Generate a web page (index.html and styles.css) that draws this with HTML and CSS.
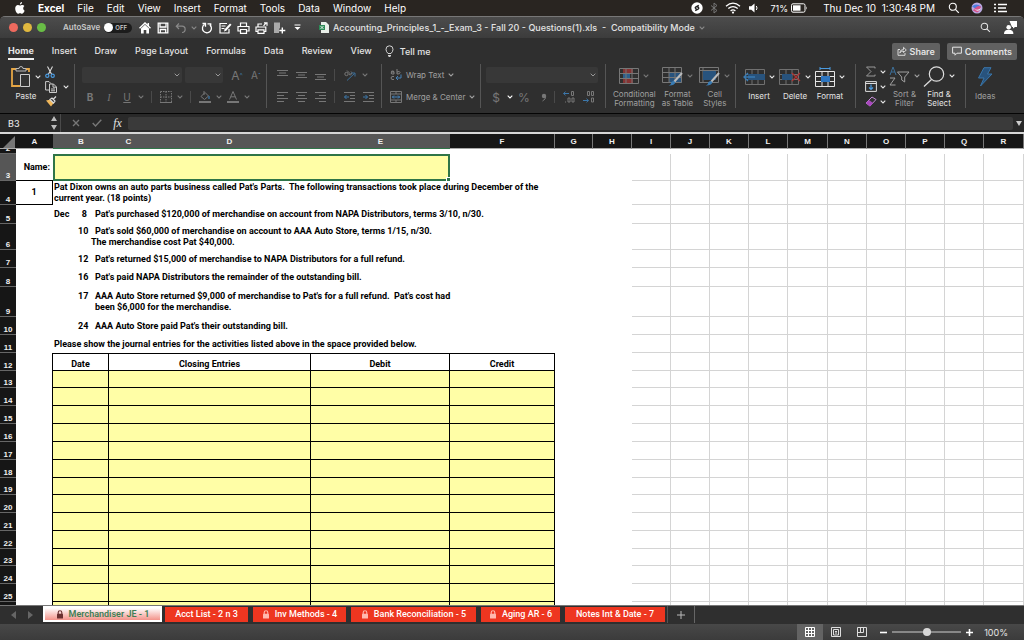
FILE: index.html
```html
<!DOCTYPE html>
<html lang="en">
<head>
<meta charset="utf-8">
<title>Accounting_Principles_1_-_Exam_3 - Fall 20 - Questions(1).xls</title>
<link rel="stylesheet" href="styles.css">
</head>
<body>
<svg class="defs" aria-hidden="true">
  <symbol id="chev" viewBox="0 0 6 4"><path d="M.7.7 3 3 5.3.7" fill="none" stroke="currentColor" stroke-width="1.1"/></symbol>
  <symbol id="lock" viewBox="0 0 8 9"><path d="M2.2 4V2.6a1.8 1.8 0 0 1 3.6 0V4" fill="none" stroke="currentColor" stroke-width="1.1"/><rect x="1" y="3.8" width="6" height="4.6" rx=".5" fill="currentColor"/></symbol>
  <symbol id="glass" viewBox="0 0 12 12"><circle cx="4.8" cy="4.8" r="3.5" fill="none" stroke="currentColor" stroke-width="1.1"/><path d="m7.4 7.4 3.4 3.4" stroke="currentColor" stroke-width="1.2"/></symbol>
  <symbol id="table" viewBox="0 0 20 16"><path d="M.5.5h19v15H.5zM.5 5.5h19M.5 10.5h19M7 .5v15M13 .5v15" fill="none" stroke="currentColor"/></symbol>
</svg>

<nav class="menubar">
  <svg class="apple" viewBox="0 0 10 12"><path d="M7 0C5.7.2 4.9 1.200 5 2.500 6.200 2.500 7.100 1.300 7 0zM9.600 8.700C9 10.300 8 11.700 7 11.700c-.8 0-1.100-.5-2-.5s-1.300.5-2 .5C1.600 11.700.2 8.800.2 6.600c0-2.300 1.300-3.600 2.700-3.600.9 0 1.500.5 2.100.5.7 0 1.300-.6 2.400-.6.8 0 1.500.4 2 1.100-1.700 1-1.500 3.800.2 4.700z" fill="#fff"/></svg>
  <div class="menus"><a href="#" class="app">Excel</a><a href="#">File</a><a href="#">Edit</a><a href="#">View</a><a href="#">Insert</a><a href="#">Format</a><a href="#">Tools</a><a href="#">Data</a><a href="#">Window</a><a href="#">Help</a></div>
  <div class="tray">
    <svg width="12" height="12" viewBox="0 0 12 12"><circle cx="6" cy="6" r="5.700" fill="#fff"/><path d="M7.800 3.300 5 4.800q-1.500 1 0 2l1 .5M4.200 8.700 7 7.200q1.500-1 0-2L6 4.700" fill="none" stroke="#222" stroke-width="1.400"/></svg>
    <svg class="dim" width="8" height="12" viewBox="0 0 8 12"><path d="m1 3.500 6 5-3 2.500V1l3 2.500-6 5" fill="none" stroke="currentColor"/></svg>
    <svg width="16" height="12" viewBox="0 0 16 12"><path d="M1 4.200q7-6 14 0M3.300 6.600q4.700-4 9.400 0M5.600 8.900q2.400-2 4.800 0" fill="none" stroke="#fff" stroke-width="1.300"/><circle cx="8" cy="10.600" r="1.100" fill="#fff"/></svg>
    <svg width="12" height="10" viewBox="0 0 12 10"><path d="M1 3.300h2.300L6.500.6v8.800L3.300 6.700H1z" fill="#fff"/><path d="M8.300 3q1.500 2 0 4" fill="none" stroke="#fff"/></svg>
    <span class="battery">71%<svg width="17" height="10" viewBox="0 0 17 10"><rect x=".5" y=".8" width="13.500" height="8.400" rx="1.500" fill="none" stroke="#fff"/><rect x="2" y="2.300" width="7.500" height="5.400" fill="#fff"/><path d="M15.300 3.200q1.500 1.800 0 3.600z" fill="#fff"/></svg></span>
    <time>Thu Dec 10&nbsp; 1:30:48 PM</time>
    <svg width="12" height="12"><use href="#glass"/></svg>
    <svg width="12" height="12" viewBox="0 0 12 12"><circle cx="6" cy="6" r="5.500" fill="#b9a8e0"/><path d="M1 4.500q4-4 9 0-4 4-9 0" fill="#4b7ee0"/><path d="M2 8.500q4-6 8-4-1 5-4 6" fill="#d6538c"/><path d="M3 7q4 2 7-1-2 5-7 1" fill="#eafaff"/></svg>
    <svg width="14" height="10" viewBox="0 0 14 10"><path d="M0 1.500h2M0 5h2M0 8.500h2M4 1.500h9M4 5h8M4 8.500h9" stroke="#fff" stroke-width="1.500"/></svg>
  </div>
</nav>

<div class="window">
<header class="titlebar">
  <div class="lights"><button class="close" aria-label="Close"></button><button class="mini" aria-label="Minimize"></button><button class="full" aria-label="Zoom"></button></div>
  <label class="autosave">AutoSave <span class="switch"><input type="checkbox">OFF</span></label>
  <div class="quick">
    <button aria-label="Home"><svg width="12" height="12" viewBox="0 0 12 12"><path d="M.5 6.300 6 1l5.500 5.300M9.300 1v3" fill="none" stroke="currentColor" stroke-width="1.500"/><path d="M2 6.500 6 2.700l4 3.800v5H7.300V8H4.700v3.500H2z" fill="currentColor"/></svg></button>
    <button aria-label="Save"><svg width="12" height="12" viewBox="0 0 12 12"><path d="M1.200 1.200h9.600v9.600H1.200z" fill="none" stroke="currentColor" stroke-width="1.300"/><path d="M3 1v4h6V1M3.300 11V7.500h5.400V11" fill="none" stroke="currentColor" stroke-width="1.300"/></svg></button>
    <button class="dim" aria-label="Undo"><svg width="12" height="12" viewBox="0 0 12 12"><path d="M4 1.500 1.300 4.200 4 7M1.500 4.200H7a3 3 0 0 1 0 6.300" fill="none" stroke="currentColor" stroke-width="1.200"/></svg></button>
    <button class="small dim" aria-label="Undo list"><svg class="chev"><use href="#chev"/></svg></button>
    <button aria-label="Repeat"><svg width="12" height="12" viewBox="0 0 12 12"><path d="M3.500 2.500a4.500 4.500 0 1 0 5.300.3M1.500 1.500h3v3.200M9.700 5V1.800H6.500" fill="none" stroke="currentColor" stroke-width="1.300"/></svg></button>
    <button aria-label="Edit"><svg width="13" height="12" viewBox="0 0 13 12"><path d="M8 1.500H1v9.500h9V7M2.500 4h4M2.500 6.500h3" fill="none" stroke="currentColor" stroke-width="1.200"/><path d="m5 9.500.7-2.300L11 1.500l1.500 1.300-5.300 6z" fill="currentColor"/></svg></button>
    <button aria-label="Print"><svg width="13" height="12" viewBox="0 0 13 12"><path d="M3.500 4V1h6v3M3.500 9H1V4.500h11V9H9.500M3.500 7.500h6v3.800h-6z" fill="none" stroke="currentColor" stroke-width="1.200"/></svg></button>
    <button aria-label="Quick print"><svg width="13" height="12" viewBox="0 0 13 12"><path d="M3 4.500V2h4M3 9.500H1V5h9.800v4.500H9M3 7.800h6v3.500H3z" fill="none" stroke="currentColor" stroke-width="1.200"/><path d="M8.500 3.800 11 1.200M9 .8h3v3" fill="none" stroke="currentColor" stroke-width="1.200"/></svg></button>
    <button aria-label="New"><svg width="13" height="12" viewBox="0 0 13 12"><path d="M1 .5h6v6H6V11H1z" fill="#aaa"/><path d="M9.300 5.500v6M6.300 8.500h6" stroke="currentColor" stroke-width="1.400"/></svg></button>
    <button aria-label="Customize"><svg width="7" height="7" viewBox="0 0 7 7"><path d="M.5 1h6" stroke="currentColor"/><path d="M.5 3h6l-3 3z" fill="currentColor"/></svg></button>
  </div>
  <h1><svg width="10" height="11" viewBox="0 0 10 11"><path d="M2 0h5l3 3v8H2z" fill="#e9efe9"/><rect y="3" width="6" height="5" fill="#2c8b57"/><path d="m1.500 4 3 3m0-3-3 3" stroke="#fff" stroke-width=".8"/></svg>Accounting_Principles_1_-_Exam_3 - Fall 20 - Questions(1).xls&nbsp; -&nbsp; Compatibility Mode<svg class="chev"><use href="#chev"/></svg></h1>
  <div class="tools"><button aria-label="Search"><svg width="11" height="11"><use href="#glass"/></svg></button><button aria-label="Account"><svg width="13" height="13" viewBox="0 0 13 13"><path d="M5.500 0H13v6h-2L9 7.500V6H8z" fill="#fff"/><circle cx="4.700" cy="6.300" r="2.300" fill="#fff"/><path d="M0 13q0-4.200 4.700-4.200T9.400 13z" fill="#fff"/></svg></button></div>
</header>

<div class="tabs">
  <nav><a href="#" class="on">Home</a><a href="#">Insert</a><a href="#">Draw</a><a href="#">Page Layout</a><a href="#">Formulas</a><a href="#">Data</a><a href="#">Review</a><a href="#">View</a></nav>
  <a href="#" class="tell"><svg width="9" height="12" viewBox="0 0 9 12"><path d="M3 8.500Q1 6.500 1 4.300a3.500 3.500 0 0 1 7 0q0 2.200-2 4.200zM3 10.500h3M3.500 11.500h2" fill="none" stroke="currentColor" stroke-width=".9"/></svg>Tell me</a>
  <div class="share"><button><svg width="10" height="10" viewBox="0 0 10 10"><path d="M3 3.500H1v5.800h7V7M2.700 7Q3 3.500 6.500 3.500V1.300L9.300 4 6.500 6.500V5Q4 5 2.700 7" fill="none" stroke="currentColor" stroke-width=".9"/></svg>Share</button><button><svg width="10" height="10" viewBox="0 0 10 10"><path d="M.6 1.200h8.800v6H5L3 9.200v-2H.6z" fill="none" stroke="currentColor"/></svg>Comments</button></div>
</div>

<div class="ribbon">
  <section class="group clipboard">
    <button class="big"><span class="pic"><svg width="20" height="22" viewBox="0 0 20 22"><path d="M5 3H1v17h8M15 3h3v3" fill="none" stroke="#e5a645" stroke-width="1.800"/><path d="M5 5V2.500h3a2 2 0 0 1 4 0h3V5z" fill="#333" stroke="#bbb"/><path d="M9.500 8.500h9v12h-9z" fill="#333" stroke="#ccc"/></svg><svg class="chev"><use href="#chev"/></svg></span>Paste</button>
    <div class="stack">
      <button aria-label="Cut"><svg width="10" height="12" viewBox="0 0 10 12"><path d="m2.500.5 4.200 8M7.500.5l-4.200 8" stroke="#ddd" stroke-width="1.100"/><g fill="none" stroke="#4b9be0" stroke-width="1.200"><circle cx="2.300" cy="9.700" r="1.600"/><circle cx="7.700" cy="9.700" r="1.600"/></g></svg></button>
      <button aria-label="Copy"><svg width="12" height="12" viewBox="0 0 12 12"><path d="M4 9H.6V.6H4l2 2M4.500 3h4l3 3v5.500h-7zM8 3v3.200h3.500M6 8h4M6 9.800h4" fill="none" stroke="#ccc"/></svg><svg class="chev"><use href="#chev"/></svg></button>
      <button aria-label="Format painter"><svg width="12" height="11" viewBox="0 0 12 11"><path d="m1 4.500 5-1 3 3-3 4z" fill="#f0b75b"/><path d="m5 3.500 2-1.500 3 3-1.500 2zM8.500 3l2.500-2.500" fill="#333" stroke="#ddd" stroke-width="1.200"/></svg></button>
    </div>
  </section>
  <section class="group font dim">
    <div class="line"><select class="face" aria-label="Font"><option></option></select><select class="size" aria-label="Font size"><option></option></select><button class="w20 letter">A<sup>^</sup></button><button class="w18 letter less">A<sup>ˇ</sup></button></div>
    <div class="line"><button class="w20"><b>B</b></button><button class="w18 serif"><i>I</i></button><button class="w18"><u>U</u></button><button class="w10" aria-label="Underline style"><svg class="chev"><use href="#chev"/></svg></button><span class="bar"></span><button class="w18" aria-label="Borders"><svg width="12" height="12" viewBox="0 0 12 12"><path d="M.5.5h11v11H.5zM6 .5v11M.5 6h11" fill="none" stroke="currentColor" stroke-dasharray="1.500 1"/><path d="M0 11.500h12" stroke="currentColor"/></svg></button><button class="w10" aria-label="Border style"><svg class="chev"><use href="#chev"/></svg></button><span class="bar"></span><button class="w18" aria-label="Fill"><svg width="12" height="12" viewBox="0 0 12 12"><path d="m2 5.500 4-4L9.500 5 5.500 8.500zM5 0v4" fill="none" stroke="currentColor"/><path d="M10 5v3" stroke="#3d6f99" stroke-width="1.500"/><path d="M0 10h12v2H0z" fill="currentColor"/></svg></button><button class="w10" aria-label="Fill colors"><svg class="chev"><use href="#chev"/></svg></button><button class="w18" aria-label="Font color"><svg width="12" height="12" viewBox="0 0 12 12"><path d="M2.500 8.500 6 .5l3.500 8M3.700 5.800h4.600" fill="none" stroke="currentColor"/><path d="M0 10h12v2H0z" fill="currentColor"/></svg></button><button class="w10" aria-label="Font colors"><svg class="chev"><use href="#chev"/></svg></button></div>
  </section>
  <section class="group align dim">
    <div class="line"><button aria-label="Top"><svg width="11" height="10" viewBox="0 0 11 10"><path d="M0 .5h11M2 3h7M0 5.500h11" stroke="currentColor"/></svg></button><button aria-label="Middle"><svg width="11" height="10" viewBox="0 0 11 10"><path d="M0 2.500h11M2 5h7M0 7.500h11" stroke="currentColor"/></svg></button><button aria-label="Bottom"><svg width="11" height="10" viewBox="0 0 11 10"><path d="M0 4.500h11M2 7h7M0 9.500h11" stroke="currentColor"/></svg></button><span class="bar"></span><button class="wide" aria-label="Orientation"><svg width="12" height="11" viewBox="0 0 12 11"><circle cx="2.500" cy="4" r="1.700" fill="none" stroke="currentColor"/><path d="m3 .5 4 4M5 4.500a1.500 1.500 0 1 0 2-3" fill="none" stroke="currentColor"/><path d="m3 10.500 7.500-7M7.500 3H11v3.500" fill="none" stroke="#3d6f99"/></svg><svg class="chev"><use href="#chev"/></svg></button></div>
    <div class="line"><button aria-label="Left"><svg width="11" height="10" viewBox="0 0 11 10"><path d="M0 .5h11M0 3.500h7M0 6.500h11M0 9.500h7" stroke="currentColor"/></svg></button><button aria-label="Center"><svg width="11" height="10" viewBox="0 0 11 10"><path d="M0 .5h11M2 3.500h7M0 6.500h11M2 9.500h7" stroke="currentColor"/></svg></button><button aria-label="Right"><svg width="11" height="10" viewBox="0 0 11 10"><path d="M0 .5h11M4 3.500h7M0 6.500h11M4 9.500h7" stroke="currentColor"/></svg></button><span class="bar"></span><button aria-label="Outdent"><svg width="11" height="10" viewBox="0 0 11 10"><path d="M0 .5h11M6 3.500h5M6 6.500h5M0 9.500h11" stroke="currentColor"/><path d="M5 5H.5M2.500 3l-2 2 2 2" fill="none" stroke="#3d78ab"/></svg></button><button aria-label="Indent"><svg width="11" height="10" viewBox="0 0 11 10"><path d="M0 .5h11M6 3.500h5M6 6.500h5M0 9.500h11" stroke="currentColor"/><path d="M0 5h4.500M2.500 3l2 2-2 2" fill="none" stroke="#3d78ab"/></svg></button></div>
  </section>
  <section class="group wrap faded">
    <div class="line"><button><svg width="12" height="12" viewBox="0 0 12 12"><path d="M1 2.500q3-1.500 3 .5v2q-3 .5-3-1t3-1M7 0v5q3 .3 3-1.500T7 3M4 7.500q-3-.5-3 1.500t3 1.500" fill="none" stroke="#8a8a8a" stroke-width=".9"/><path d="M11 5.500V9H6M8 7 6 9l2 2" fill="none" stroke="#4682b8"/></svg>Wrap Text<svg class="chev"><use href="#chev"/></svg></button></div>
    <div class="line"><button><svg width="12" height="12" viewBox="0 0 12 12"><path d="M.5.5h11v11H.5zM.5 3h11M.5 9h11M6 .5V3M6 9v2.500" fill="none" stroke="#777"/><path d="M2 6h8M4 4.500 2.500 6 4 7.500M8 4.500 9.500 6 8 7.500" fill="none" stroke="#4682b8"/></svg>Merge &amp; Center<svg class="chev"><use href="#chev"/></svg></button></div>
  </section>
  <section class="group number dim">
    <div class="line"><select aria-label="Number format"><option></option></select></div>
    <div class="line symbols"><button>$</button><button class="small lit" aria-label="Currency"><svg class="chev"><use href="#chev"/></svg></button><button>%</button><button class="comma" aria-label="Comma style"><svg width="6" height="9" viewBox="0 0 6 9"><circle cx="3" cy="3" r="2.200" fill="currentColor"/><path d="M4.700 3Q5 6.500 1.500 8" fill="none" stroke="currentColor"/></svg></button><span class="bar"></span><button aria-label="Increase decimal"><svg width="12" height="12" viewBox="0 0 12 12"><path d="M6 2.500H.5M2.500.7.600 2.500l1.900 1.800" fill="none" stroke="#3d78ab"/><path d="M8.500.5h2v4h-2zM5 7h2v4H5zM9 7h2v4H9zM2.500 10.500v1" fill="none" stroke="currentColor"/></svg></button><button aria-label="Decrease decimal"><svg width="12" height="12" viewBox="0 0 12 12"><path d="M0 9.500h5.500M3.500 7.700l1.900 1.800-1.900 1.800" fill="none" stroke="#3d78ab"/><path d="M4.500.5h2v4h-2zM8.500.5h2v4h-2zM8.500 7h2v4h-2z" fill="none" stroke="currentColor"/></svg></button></div>
  </section>
  <section class="group styles faded">
    <button class="big"><span class="pic"><svg width="20" height="16" viewBox="0 0 20 16"><rect x="4" width="10" height="5" fill="#853333"/><rect x="4" y="6" width="7" height="4" fill="#2e5f8b"/><rect x="4" y="11" width="10" height="5" fill="#853333"/><use href="#table" width="20" height="16"/></svg><svg class="chev"><use href="#chev"/></svg></span>Conditional<br>Formatting</button>
    <button class="big"><span class="pic"><svg width="21" height="19" viewBox="0 0 21 19"><path d="M7 6h13v10H7z" fill="#28537d"/><use href="#table" width="20" height="16"/><path d="m20 6-8 9" stroke="#bbb" stroke-width="2"/><path d="m12 14 1.500 1.500q-1.500 3.500-7 3 3-1 2.500-3 1.500-2 3-1.500" fill="#397bb3"/></svg><svg class="chev"><use href="#chev"/></svg></span>Format<br>as Table</button>
    <button class="big"><span class="pic"><svg width="21" height="19" viewBox="0 0 21 19"><path d="M.5.5h19v15H.5zM.5 3.500h19M4 .5v15" fill="none" stroke="currentColor"/><path d="M4 4h13v9H4z" fill="#28537d"/><path d="m20 6-8 9" stroke="#bbb" stroke-width="2"/><path d="m12 14 1.500 1.500q-1.500 3.500-7 3 3-1 2.500-3 1.500-2 3-1.500" fill="#397bb3"/></svg><svg class="chev"><use href="#chev"/></svg></span>Cell<br>Styles</button>
  </section>
  <section class="group cells">
    <button class="big"><span class="pic"><svg class="grayed" width="22" height="16" viewBox="0 0 22 16"><use href="#table" x="2" width="20" height="16"/><path d="M5 5h17v6H5z" fill="#28537d"/><path d="M12 8H1M5 4 1 8l4 4" fill="none" stroke="#397bb3" stroke-width="1.300"/></svg><svg class="chev"><use href="#chev"/></svg></span>Insert</button>
    <button class="big"><span class="pic"><svg class="grayed" width="22" height="16" viewBox="0 0 22 16"><use href="#table" width="20" height="16"/><path d="M3 5h10v6H3z" fill="#28537d"/><path d="m13 4 8 8m0-8-8 8" stroke="#a33" stroke-width="1.300"/></svg><svg class="chev"><use href="#chev"/></svg></span>Delete</button>
    <button class="big"><span class="pic"><svg width="20" height="20" viewBox="0 0 20 20"><path d="M5 1.500h10M5 0v3M15 0v3" stroke="#4b9be0"/><use href="#table" y="4" width="20" height="16"/><path d="M6 9h9v6H6z" fill="#2d75c0"/></svg><svg class="chev"><use href="#chev"/></svg></span>Format</button>
  </section>
  <section class="group editing">
    <div class="stack">
      <button aria-label="Sum"><svg width="12" height="11" viewBox="0 0 12 11"><path d="M10 2.500V1H1.500L6 5.500 1.500 10H10V8.500" fill="none" stroke="#999"/></svg><svg class="chev"><use href="#chev"/></svg></button>
      <button aria-label="Fill"><svg width="12" height="11" viewBox="0 0 12 11"><path d="M.6.6h10.800v9.800H.6zM.6 2.500h10.800" fill="none" stroke="#ddd"/><path d="M6 3.500v5M4 6.500l2 2 2-2" fill="none" stroke="#4b9be0" stroke-width="1.200"/></svg><svg class="chev"><use href="#chev"/></svg></button>
      <button aria-label="Clear"><svg width="12" height="11" viewBox="0 0 12 11"><path d="m1 7 6-6 4 2.500-6 6.500z" fill="#333" stroke="#c58ad6"/><path d="m1 7 3-3 4 3-3 3.500z" fill="#a847bd"/></svg><svg class="chev"><use href="#chev"/></svg></button>
    </div>
    <button class="big faded"><span class="pic"><svg width="21" height="20" viewBox="0 0 21 20"><path d="m1 9 3-8 3 8M2 6h4" fill="none" stroke="#3d6f99"/><path d="M1 12h5l-5 7h5.500M8.500 6h11.500l-4.300 5v5l-3-2v-3z" fill="none" stroke="currentColor"/></svg><svg class="chev"><use href="#chev"/></svg></span>Sort &amp;<br>Filter</button>
    <button class="big"><span class="pic"><svg width="22" height="21" viewBox="0 0 22 21"><circle cx="13.500" cy="8" r="7.200" fill="none" stroke="#ddd" stroke-width="1.200"/><path d="m8.500 13.500-7.500 7" stroke="#ddd" stroke-width="1.300"/></svg><svg class="chev"><use href="#chev"/></svg></span>Find &amp;<br>Select</button>
  </section>
  <section class="group ideas faded">
    <button class="big"><span class="pic"><svg width="16" height="20" viewBox="0 0 16 20"><path d="M7 .7h7L10.500 7H15L3.500 19 7 11H1.500z" fill="#28537d" stroke="#3a76aa"/></svg></span>Ideas</button>
  </section>
</div>

<div class="formula">
  <input class="namebox" value="B3" aria-label="Name box">
  <svg width="6" height="14" viewBox="0 0 6 14"><path d="m0 5 3-5 3 5zM0 9h6l-3 5z" fill="#bbb"/></svg>
  <span class="bar"></span>
  <button class="dim" aria-label="Cancel"><svg width="8" height="8" viewBox="0 0 8 8"><path d="m1 1 6 6m0-6L1 7" stroke="currentColor" stroke-width="1.400"/></svg></button>
  <button class="dim" aria-label="Enter"><svg width="10" height="8" viewBox="0 0 10 8"><path d="m.7 4 2.800 3L9.300.7" fill="none" stroke="currentColor" stroke-width="1.400"/></svg></button>
  <button class="fx">fx</button>
  <input class="entry" aria-label="Formula">
  <svg width="6" height="5" viewBox="0 0 6 5"><path d="M0 0h6L3 5z" fill="#ccc"/></svg>
</div>

<main class="grid">
<table class="sheet">
<colgroup><col class="c16"><col class="c37"><col class="c56"><col class="c39"><col class="c163"><col class="c139"><col class="c105"><col class="c38"><col class="c39"><col class="c39"><col class="c39"><col class="c39"><col class="c39"><col class="c40"><col class="c39"><col class="c39"><col class="c39"><col class="c39"><col></colgroup>
<thead><tr><th class="corner"><svg width="12" height="12" viewBox="0 0 12 12"><path d="M12 0v12H0z" fill="#777"/></svg></th><th>A</th><th class="sel">B</th><th class="sel">C</th><th class="sel">D</th><th class="sel">E</th><th>F</th><th>G</th><th>H</th><th>I</th><th>J</th><th>K</th><th>L</th><th>M</th><th>N</th><th>O</th><th>P</th><th>Q</th><th>R</th></tr></thead>
<tbody>
<tr class="cut"><th><span>2</span></th><td colspan="18"></td></tr>
<tr class="h27"><th class="sel">3</th><td class="name">Name:</td><td class="active" colspan="4"><span class="handle"></span></td><td colspan="3"></td><td><td><td><td><td><td><td><td><td><td></tr>
<tr class="h24"><th>4</th><td class="qnum">1</td><td class="text" colspan="7">Pat Dixon owns an auto parts business called Pat's Parts.&nbsp; The following transactions took place during December of the<br>current year. (18 points)</td><td><td><td><td><td><td><td><td><td><td></tr>
<tr class="h19"><th>5</th><td></td><td class="text" colspan="7"><div class="item"><span>Dec</span><span class="day">8</span><span>Pat's purchased $120,000 of merchandise on account from NAPA Distributors, terms 3/10, n/30.</span></div></td><td><td><td><td><td><td><td><td><td><td></tr>
<tr class="h26"><th>6</th><td></td><td class="text" colspan="7"><div class="item"><span></span><span class="day">10</span><span>Pat's sold $60,000 of merchandise on account to AAA Auto Store, terms 1/15, n/30.</span></div><div class="more">The merchandise cost Pat $40,000.</div></td><td><td><td><td><td><td><td><td><td><td></tr>
<tr class="h18"><th>7</th><td></td><td class="text" colspan="7"><div class="item"><span></span><span class="day">12</span><span>Pat's returned $15,000 of merchandise to NAPA Distributors for a full refund.</span></div></td><td><td><td><td><td><td><td><td><td><td></tr>
<tr class="h19"><th>8</th><td></td><td class="text" colspan="7"><div class="item"><span></span><span class="day">16</span><span>Pat's paid NAPA Distributors the remainder of the outstanding bill.</span></div></td><td><td><td><td><td><td><td><td><td><td></tr>
<tr class="h30"><th>9</th><td></td><td class="text" colspan="7"><div class="item"><span></span><span class="day">17</span><span>AAA Auto Store returned $9,000 of merchandise to Pat's for a full refund.&nbsp; Pat's cost had<br>been $6,000 for the merchandise.</span></div></td><td><td><td><td><td><td><td><td><td><td></tr>
<tr class="h18"><th>10</th><td></td><td class="text" colspan="7"><div class="item"><span></span><span class="day">24</span><span>AAA Auto Store paid Pat's their outstanding bill.</span></div></td><td><td><td><td><td><td><td><td><td><td></tr>
<tr class="h18"><th>11</th><td></td><td class="text" colspan="7">Please show the journal entries for the activities listed above in the space provided below.</td><td><td><td><td><td><td><td><td><td><td></tr>
<tr class="h18 head"><th>12</th><td class="edge"></td><td class="j">Date</td><td class="j" colspan="2">Closing Entries</td><td class="j">Debit</td><td class="j">Credit</td><td colspan="2"></td><td><td><td><td><td><td><td><td><td><td></tr>
<tr class="h17"><th>13</th><td class="edge"></td><td class="j y"></td><td class="j y" colspan="2"></td><td class="j y"></td><td class="j y"></td><td colspan="2"></td><td><td><td><td><td><td><td><td><td><td></tr>
<tr class="h18"><th>14</th><td class="edge"></td><td class="j y"></td><td class="j y" colspan="2"></td><td class="j y"></td><td class="j y"></td><td colspan="2"></td><td><td><td><td><td><td><td><td><td><td></tr>
<tr class="h18"><th>15</th><td class="edge"></td><td class="j y"></td><td class="j y" colspan="2"></td><td class="j y"></td><td class="j y"></td><td colspan="2"></td><td><td><td><td><td><td><td><td><td><td></tr>
<tr class="h18"><th>16</th><td class="edge"></td><td class="j y"></td><td class="j y" colspan="2"></td><td class="j y"></td><td class="j y"></td><td colspan="2"></td><td><td><td><td><td><td><td><td><td><td></tr>
<tr class="h18"><th>17</th><td class="edge"></td><td class="j y"></td><td class="j y" colspan="2"></td><td class="j y"></td><td class="j y"></td><td colspan="2"></td><td><td><td><td><td><td><td><td><td><td></tr>
<tr class="h18"><th>18</th><td class="edge"></td><td class="j y"></td><td class="j y" colspan="2"></td><td class="j y"></td><td class="j y"></td><td colspan="2"></td><td><td><td><td><td><td><td><td><td><td></tr>
<tr class="h17"><th>19</th><td class="edge"></td><td class="j y"></td><td class="j y" colspan="2"></td><td class="j y"></td><td class="j y"></td><td colspan="2"></td><td><td><td><td><td><td><td><td><td><td></tr>
<tr class="h18"><th>20</th><td class="edge"></td><td class="j y"></td><td class="j y" colspan="2"></td><td class="j y"></td><td class="j y"></td><td colspan="2"></td><td><td><td><td><td><td><td><td><td><td></tr>
<tr class="h18"><th>21</th><td class="edge"></td><td class="j y"></td><td class="j y" colspan="2"></td><td class="j y"></td><td class="j y"></td><td colspan="2"></td><td><td><td><td><td><td><td><td><td><td></tr>
<tr class="h18"><th>22</th><td class="edge"></td><td class="j y"></td><td class="j y" colspan="2"></td><td class="j y"></td><td class="j y"></td><td colspan="2"></td><td><td><td><td><td><td><td><td><td><td></tr>
<tr class="h17"><th>23</th><td class="edge"></td><td class="j y"></td><td class="j y" colspan="2"></td><td class="j y"></td><td class="j y"></td><td colspan="2"></td><td><td><td><td><td><td><td><td><td><td></tr>
<tr class="h18"><th>24</th><td class="edge"></td><td class="j y"></td><td class="j y" colspan="2"></td><td class="j y"></td><td class="j y"></td><td colspan="2"></td><td><td><td><td><td><td><td><td><td><td></tr>
<tr class="h18"><th>25</th><td class="edge"></td><td class="j y"></td><td class="j y" colspan="2"></td><td class="j y"></td><td class="j y"></td><td colspan="2"></td><td><td><td><td><td><td><td><td><td><td></tr>
<tr class="h18"><th></th><td class="edge"></td><td class="j y"></td><td class="j y" colspan="2"></td><td class="j y"></td><td class="j y"></td><td colspan="2"></td><td><td><td><td><td><td><td><td><td><td></tr>
</tbody>
</table>
</main>

<div class="sheets">
  <button class="arrow" aria-label="Previous sheet"><svg width="5" height="8" viewBox="0 0 5 8"><path d="M5 0v8L0 4z" fill="#666"/></svg></button>
  <button class="arrow" aria-label="Next sheet"><svg width="5" height="8" viewBox="0 0 5 8"><path d="M0 0v8l5-4z" fill="#666"/></svg></button>
  <nav>
    <a href="#" class="current w119"><svg class="lock"><use href="#lock"/></svg>Merchandiser JE - 1</a>
    <a href="#" class="w83">Acct List - 2 n 3</a>
    <a href="#" class="w93"><svg class="lock"><use href="#lock"/></svg>Inv Methods - 4</a>
    <a href="#" class="w125"><svg class="lock"><use href="#lock"/></svg>Bank Reconciliation - 5</a>
    <a href="#" class="w79"><svg class="lock"><use href="#lock"/></svg>Aging AR - 6</a>
    <a href="#" class="w100">Notes Int &amp; Date - 7</a>
  </nav>
  <button class="add" aria-label="Add sheet"><svg width="8" height="8" viewBox="0 0 8 8"><path d="M4 0v8M0 4h8" stroke="#bbb"/></svg></button>
</div>

<footer class="status">
  <button class="view on" aria-label="Normal"><svg width="10" height="10" viewBox="0 0 10 10"><path d="M.5.500h9v9h-9zM3.500.5v9M6.500.5v9M.5 3.500h9M.5 6.500h9" fill="none" stroke="#fff"/></svg></button>
  <button class="view" aria-label="Page layout"><svg width="10" height="10" viewBox="0 0 10 10"><path d="M.5.500h9v9h-9zM2.500 2.500h5v5.500h-5zM4 4.500h2M4 6h2" fill="none" stroke="#ddd"/></svg></button>
  <button class="view" aria-label="Page break"><svg width="10" height="10" viewBox="0 0 10 10"><path d="M.5.500h9v9h-9zM.5 5.500h6v-5M3.500 .5v5" fill="none" stroke="#ddd"/></svg></button>
  <button class="step" aria-label="Zoom out"><svg width="7" height="7" viewBox="0 0 7 7"><path d="M0 3.500h7" stroke="#fff" stroke-width="1.600"/></svg></button>
  <input type="range" aria-label="Zoom" value="50">
  <button class="step" aria-label="Zoom in"><svg width="7" height="7" viewBox="0 0 7 7"><path d="M0 3.500h7M3.500 0v7" stroke="#fff" stroke-width="1.600"/></svg></button>
  <span class="pct">100%</span>
</footer>
</div>
</body>
</html>
```

FILE: styles.css
```css
* { box-sizing: border-box; }
body {
  margin: 0;
  height: 100vh;
  display: flex;
  flex-direction: column;
  overflow: hidden;
  background: #292521;
  color: #e4e4e4;
  font: 9px/11px Inter, "Liberation Sans", sans-serif;
}
.defs { position: absolute; width: 0; height: 0; }
svg { display: block; flex: none; }
a { color: inherit; text-decoration: none; white-space: nowrap; }
button {
  display: flex;
  align-items: center;
  justify-content: center;
  flex: none;
  margin: 0;
  padding: 0;
  border: 0;
  background: none;
  color: inherit;
  font: inherit;
  white-space: nowrap;
}
input, select { margin: 0; border: 0; color: inherit; font: inherit; }
.chev { width: 6px; height: 4px; }
.dim { color: #777; }
.faded { color: #a0a0a0; }

/* System menu bar */
.menubar {
  display: flex;
  align-items: center;
  height: 16px;
  padding: 0 16px 0 15px;
  font-size: 10px;
  color: #fff;
}
.apple { width: 10px; height: 12px; margin-right: 13px; }
.menus { display: flex; gap: 13px; }
.app { font-weight: 700; }
.tray { display: flex; align-items: center; gap: 11px; margin-left: auto; white-space: nowrap; }
.tray > svg:nth-child(-n+3) { margin-right: -4px; }
.battery { display: flex; align-items: center; gap: 3px; margin-right: 4px; font-size: 9px; }
time { margin-right: 2px; }

/* Window */
.window {
  display: flex;
  flex-direction: column;
  flex: 1;
  min-height: 0;
  border-top: 1px solid #777;
  border-radius: 5px 5px 0 0;
  background: #2f2f2f;
  overflow: hidden;
}
.titlebar {
  display: flex;
  align-items: center;
  height: 21px;
  flex: none;
  padding: 0 7px 0 9px;
  background: linear-gradient(#4c4c4c, #3c3c3c);
}
.lights { display: flex; gap: 5px; margin-right: 17px; }
.lights button { width: 9px; height: 9px; border-radius: 50%; }
.close { background: #ee6a5e; }
.mini { background: #e0b83f; }
.full { background: #69bd46; }
.autosave { display: flex; align-items: center; gap: 4px; width: 73px; font-size: 8px; font-weight: 600; color: #c8c8c8; }
.switch { display: flex; align-items: center; gap: 2px; width: 28px; height: 10px; border-radius: 5px; background: #1c1c1c; font-size: 6px; }
.switch input { appearance: none; width: 9px; height: 9px; border-radius: 50%; background: #fff; }
.quick { display: flex; align-items: center; width: 183px; color: #fff; }
.quick button { width: 18px; height: 16px; }
.quick .small { width: 8px; }
.quick .dim { color: #888; }
h1 { display: flex; align-items: center; gap: 4px; margin: 0; font-size: 9px; font-weight: 500; white-space: nowrap; }
h1 .chev { color: #888; }
.tools { display: flex; gap: 13px; margin-left: auto; }

/* Ribbon tabs */
.tabs { display: flex; align-items: center; height: 26px; flex: none; padding: 0 7px 0 8px; font-weight: 500; }
.tabs nav { display: flex; gap: 18px; }
.tabs nav a { height: 18px; padding-top: 3px; }
.tabs .on { border-bottom: 2px solid #eee; font-weight: 700; }
.tell { display: flex; align-items: center; gap: 6px; margin-left: 13px; }
.share { display: flex; gap: 7px; margin-left: auto; }
.share button { height: 17px; padding: 0 5px; gap: 3px; border-radius: 2px; background: #616161; font-weight: 600; }

/* Ribbon */
.ribbon { display: flex; height: 50px; flex: none; padding-bottom: 2px; border-bottom: 1px solid #050505; font-size: 8px; line-height: 9px; }
.group { flex: none; display: flex; height: 44px; border-right: 1px solid #555; }
.group.font, .align, .wrap, .number { flex-direction: column; }
.line { display: flex; align-items: center; height: 23px; }
.bar { flex: none; width: 1px; height: 12px; background: #4a4a4a; }
.big { flex-direction: column; justify-content: flex-start; }
.pic { display: flex; align-items: center; justify-content: center; gap: 5px; height: 26px; margin-bottom: 2px; }
.stack { display: flex; flex-direction: column; }
.stack button { height: 15px; gap: 6px; justify-content: flex-start; }
.clipboard { width: 75px; padding-left: 11px; gap: 4px; }
.clipboard .big .pic { gap: 4px; }
.font { width: 192px; padding-left: 5px; }
select { appearance: none; height: 16px; border-radius: 2px; }
.face { width: 100px; margin: 0 3px 0 2px; }
.size { width: 38px; margin-right: 4px; }
.face, .size, .number select {
  background: #383838 url("data:image/svg+xml,%3Csvg xmlns='http://www.w3.org/2000/svg' width='6' height='4'%3E%3Cpath d='M.7.7 3 3 5.300.7' fill='none' stroke='%23999'/%3E%3C/svg%3E") no-repeat right 2px center;
}
.w20 { width: 20px; }
.w18 { width: 18px; }
.w10 { width: 10px; }
.font .line { font-size: 10px; }
.font .bar { margin: 0 5px; }
.font .letter { font-size: 12px; }
.font .less { font-size: 10px; }
sup { font-size: 7px; line-height: 7px; color: #3d6f99; }
.serif { font-family: "Liberation Serif", serif; }
.align { width: 115px; padding-left: 6px; }
.align button { width: 19px; }
.align .bar { margin: 0 5px 0 4px; }
.align .wide { width: 32px; gap: 6px; }
.wrap { width: 99px; padding-left: 8px; }
.wrap button { gap: 4px; }
.number { width: 125px; padding-left: 5px; }
.number select { width: 112px; }
.symbols { font-size: 12px; }
.symbols button { width: 20px; }
.symbols .small { width: 8px; }
.symbols .bar { margin-right: 4px; }
.lit { color: #fff; }
.styles { width: 130px; padding-left: 7px; gap: 6px; }
.styles .pic { color: #777; }
.styles .pic, .cells .pic, .editing .pic { gap: 4px; }
.cells { width: 120px; padding-left: 7px; gap: 4px; }
.grayed { color: #707070; }
.editing { width: 110px; padding-left: 9px; gap: 3px; }
.editing .stack button { gap: 3px; }
.ideas { flex: 1; border: 0; padding-left: 9px; }

/* Formula bar */
.formula { display: flex; align-items: center; height: 18px; flex: none; padding: 0 2px 0 8px; background: #292929; }
.namebox { width: 43px; padding: 0; background: none; font-weight: 500; }
.formula .bar { height: 18px; margin: 0 4px 0 3px; }
.formula button { width: 21px; }
.formula .fx { font: italic 12px/14px "Liberation Serif", serif; }
.entry { flex: 1; height: 13px; margin-right: 3px; border-radius: 2px; background: #3a3a3a; }

/* Worksheet */
.grid { flex: 1; min-height: 0; overflow: hidden; background: #fff; border-top: 2px solid #d6d6d6; }
.sheet { width: 100%; table-layout: fixed; border-collapse: separate; border-spacing: 0; color: #000; font: bold 9px/11px Roboto, "Liberation Sans", sans-serif; }
.c16 { width: 16px; }
.c37 { width: 37px; }
.c38 { width: 38px; }
.c39 { width: 39px; }
.c40 { width: 40px; }
.c56 { width: 56px; }
.c105 { width: 105px; }
.c139 { width: 139px; }
.c163 { width: 163px; }
.sheet th, .sheet td { padding: 0; white-space: nowrap; }
.sheet th { background: #161616; color: #f0f0f0; font: bold 8px/9px "Liberation Sans", Arial, sans-serif; }
thead th { height: 15px; border-bottom: 1px solid #aaa; border-right: 1px solid #777; }
thead th:nth-child(-n+6) { border-right: 0; }
.sheet th.sel { background: #565656; }
thead th.sel { border-bottom-color: #2f7548; }
thead .corner svg { margin: 1px 0 0 3px; }
tbody th { border-bottom: 1px solid #666; vertical-align: bottom; }
.cut { height: 5px; }
.cut span { display: flex; align-items: flex-end; justify-content: center; height: 4px; overflow: hidden; }
.h17 { height: 17px; }
.h18 { height: 18px; }
.h19 { height: 19px; }
.h24 { height: 24px; }
.h26 { height: 26px; }
.h27 { height: 27px; }
.h30 { height: 30px; }
tbody tr:not(.cut) td:nth-last-child(-n+10) { border-right: 1px solid #d4d4d4; border-bottom: 1px solid #d4d4d4; }
.sheet .name { text-align: right; padding-right: 3px; border-bottom: 1px solid #000; }
.qnum { text-align: center; border-right: 1px solid #000; border-bottom: 1px solid #000; }
.active { position: relative; background: #fffea6; border: 2px solid #2f7548; }
.handle { position: absolute; right: -3px; bottom: -3px; width: 5px; height: 5px; background: #2f7548; border: 1px solid #fff; }
.sheet .text { padding-left: 1px; vertical-align: middle; }
.item { display: grid; grid-template-columns: 24px 9px auto; justify-content: start; }
.item span:last-child { padding-left: 8px; }
.day { text-align: right; }
.more { padding-left: 37px; }
.edge { border-right: 1px solid #000; }
.j { border-right: 1px solid #000; border-bottom: 1px solid #000; text-align: center; vertical-align: bottom; }
.y { background: #fffea6; }
.head .j { border-top: 1px solid #000; }

/* Sheet tabs */
.sheets { display: flex; align-items: flex-start; height: 19px; flex: none; padding-left: 5px; border-top: 1px solid #777; background: #2f2f2f; }
.arrow { width: 17px; height: 18px; }
.sheets nav { display: flex; gap: 5px; margin-left: 4px; font-family: Roboto, sans-serif; }
.sheets nav a { display: flex; align-items: center; justify-content: center; gap: 5px; height: 15px; margin-top: 1px; background: #ee3620; color: #fff; font-weight: 500; }
.sheets .current { height: 16px; margin: 0 -2px 0 0; border: 2px solid #fff; background: linear-gradient(#fff, #f3938a); color: #3f7f55; font-weight: 600; }
.lock { width: 8px; height: 9px; color: #ffb9ae; }
.current .lock { color: #6a3030; }
.w79 { width: 79px; }
.w83 { width: 83px; }
.w93 { width: 93px; }
.w100 { width: 100px; }
.w119 { width: 119px; }
.w125 { width: 125px; }
.add { width: 28px; height: 17px; margin-left: 2px; border-right: 1px solid #666; border-left: 1px solid #555; }

/* Status bar */
.status { display: flex; align-items: center; justify-content: flex-end; height: 16px; flex: none; padding-right: 16px; background: linear-gradient(#484848, #3b3b3b); }
.view { width: 26px; height: 16px; }
.view.on { background: #636363; }
.step { width: 17px; height: 16px; }
input[type=range] { appearance: none; width: 69px; height: 9px; background: linear-gradient(#888, #888) center / 100% 2px no-repeat; }
input[type=range]::-webkit-slider-thumb { appearance: none; width: 8px; height: 8px; border-radius: 50%; background: #d8d8d8; }
.pct { width: 30px; text-align: right; }
```
